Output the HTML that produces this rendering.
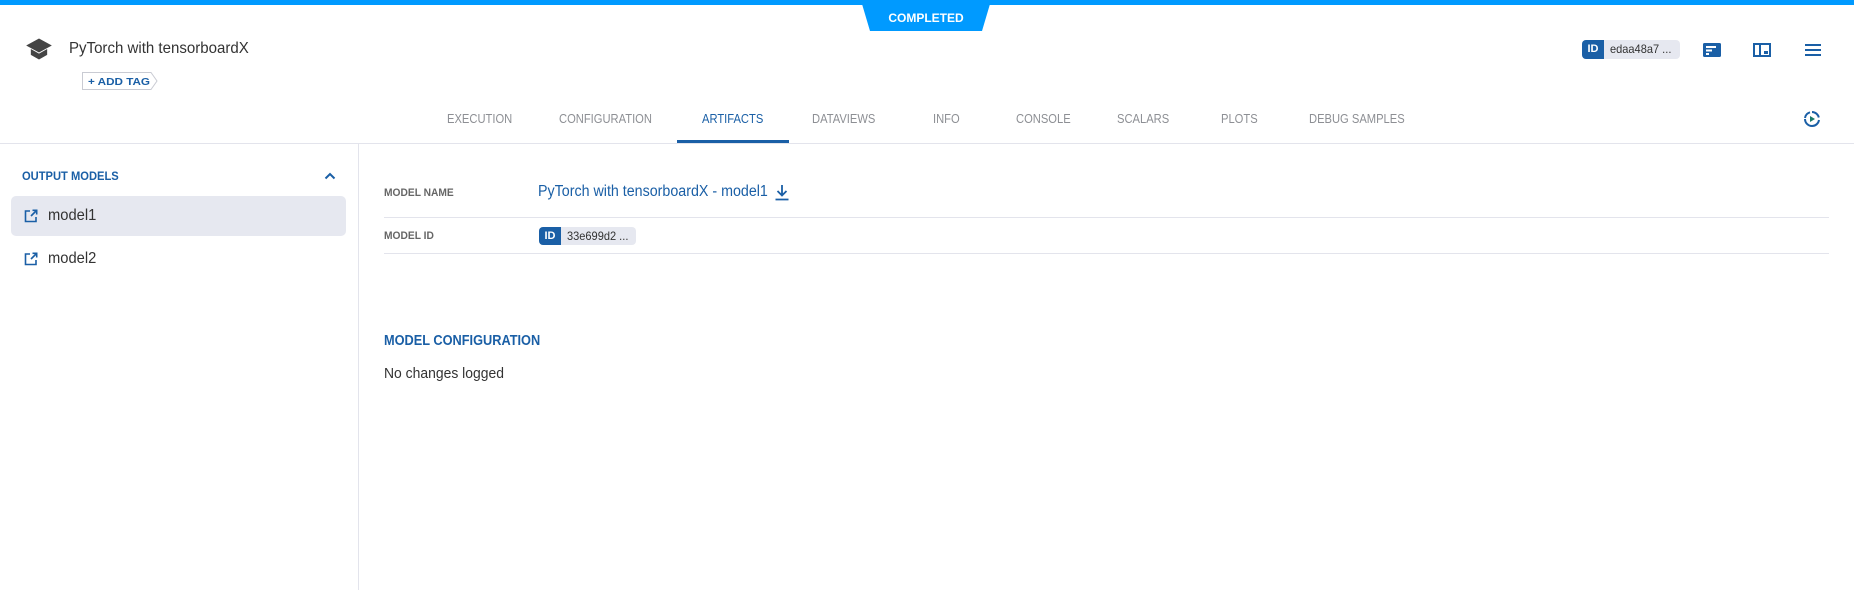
<!DOCTYPE html>
<html><head><meta charset="utf-8"><style>
*{box-sizing:border-box;margin:0;padding:0}
body{width:1854px;height:590px;overflow:hidden;background:#fff;font-family:"Liberation Sans",sans-serif;position:relative}
.a{position:absolute;transform-origin:0 0}
.tab{position:absolute;top:111px;font-size:13px;color:#8d8f94;transform:scaleX(.86);transform-origin:0 0}
.lbl{font-size:11px;font-weight:bold;color:#666;position:absolute;transform:scaleX(.93);transform-origin:0 0}
</style></head><body>
<div class="a" style="left:0;top:0;width:1854px;height:5px;background:#009aff"></div>
<svg class="a" style="left:862px;top:4px" width="128" height="28"><polygon points="0,0 128,0 120,27 8,27" fill="#009aff"/><text x="64" y="18" text-anchor="middle" font-family="Liberation Sans" font-size="12" font-weight="bold" fill="#fff">COMPLETED</text></svg>
<svg class="a" style="left:25px;top:37px" width="28" height="24" viewBox="0 0 24 20"><path d="M12 1L1 7l11 6 11-6z" fill="#444"/><path d="M5 10v5l7 4 7-4v-5l-7 4z" fill="#444"/></svg>
<div class="a" style="left:69px;top:40px;font-size:16px;color:#333;transform:scaleX(.94)">PyTorch with tensorboardX</div>
<svg class="a" style="left:81px;top:71px" width="78" height="20"><path d="M1.5 1.5H70L76 10 70 18.5H1.5z" fill="#fff" stroke="#c9cbd3"/><text x="7" y="14" font-family="Liberation Sans" font-size="10.5" font-weight="bold" fill="#1a5fa6" textLength="62" lengthAdjust="spacingAndGlyphs">+ ADD TAG</text></svg>
<div class="tab" style="left:447px">EXECUTION</div>
<div class="tab" style="left:559px">CONFIGURATION</div>
<div class="tab" style="left:702px;color:#1a5fa6">ARTIFACTS</div>
<div class="tab" style="left:812px">DATAVIEWS</div>
<div class="tab" style="left:933px">INFO</div>
<div class="tab" style="left:1016px">CONSOLE</div>
<div class="tab" style="left:1117px">SCALARS</div>
<div class="tab" style="left:1221px">PLOTS</div>
<div class="tab" style="left:1309px">DEBUG SAMPLES</div>
<div class="a" style="left:677px;top:140px;width:112px;height:3px;background:#1a5fa6"></div>
<div class="a" style="left:0;top:143px;width:1854px;height:1px;background:#e3e4ec"></div>
<div class="a" style="left:1582px;top:40px;width:98px;height:19px;border-radius:4px;background:#e6e8f0;overflow:hidden"><div style="position:absolute;left:0;top:0;width:22px;height:19px;background:#1a5fa6;color:#fff;font-size:11px;font-weight:bold;text-align:center;line-height:19px">ID</div><div style="position:absolute;left:28px;top:2px;font-size:12px;color:#333;transform:scaleX(.92);transform-origin:0 0">edaa48a7 ...</div></div>
<svg class="a" style="left:1703px;top:43px" width="18" height="14"><rect width="18" height="14" rx="1.5" fill="#1a5fa6"/><rect x="3" y="3" width="10" height="2" fill="#fff"/><rect x="3" y="6.5" width="6" height="2" fill="#fff"/><rect x="3" y="10" width="3" height="2" fill="#fff"/></svg>
<svg class="a" style="left:1753px;top:43px" width="18" height="14"><rect x="1" y="1" width="16" height="12" fill="none" stroke="#1a5fa6" stroke-width="2"/><rect x="6" y="1" width="2" height="12" fill="#1a5fa6"/><rect x="11" y="8" width="4" height="3" fill="#1a5fa6"/></svg>
<svg class="a" style="left:1805px;top:44px" width="16" height="12"><rect y="0" width="16" height="2" fill="#1a5fa6"/><rect y="5" width="16" height="2" fill="#1a5fa6"/><rect y="10" width="16" height="2" fill="#1a5fa6"/></svg>
<svg class="a" style="left:1803px;top:110px" width="18" height="18" viewBox="0 0 18 18"><path d="M9 2a7 7 0 0 1 6.8 5.5M16 10a7 7 0 0 1-7 6M9 16a7 7 0 0 1-7-7M2 8A7 7 0 0 1 7 2.3" fill="none" stroke="#1a5fa6" stroke-width="2"/><path d="M7 6l5 3-5 3z" fill="#1a7a6a"/></svg>
<div class="a" style="left:358px;top:144px;width:1px;height:446px;background:#e3e4ec"></div>
<div class="a" style="left:22px;top:169px;font-size:12px;font-weight:bold;color:#1a5fa6;transform:scaleX(.93)">OUTPUT MODELS</div>
<svg class="a" style="left:324px;top:171px" width="12" height="9"><path d="M1.5 7.5L6 3l4.5 4.5" fill="none" stroke="#1a5fa6" stroke-width="2"/></svg>
<div class="a" style="left:11px;top:196px;width:335px;height:40px;border-radius:5px;background:#e6e8f0"></div>
<svg class="a" style="left:24px;top:209px" width="14" height="14"><path d="M6 2H1.5v10.5H12V8" fill="none" stroke="#1a5fa6" stroke-width="1.6"/><path d="M7 7l5.5-5.5M8.5 1.3h4.2v4.2" fill="none" stroke="#1a5fa6" stroke-width="1.6"/></svg>
<div class="a" style="left:48px;top:207px;font-size:16px;color:#333;transform:scaleX(.92)">model1</div>
<svg class="a" style="left:24px;top:252px" width="14" height="14"><path d="M6 2H1.5v10.5H12V8" fill="none" stroke="#1a5fa6" stroke-width="1.6"/><path d="M7 7l5.5-5.5M8.5 1.3h4.2v4.2" fill="none" stroke="#1a5fa6" stroke-width="1.6"/></svg>
<div class="a" style="left:48px;top:250px;font-size:16px;color:#333;transform:scaleX(.92)">model2</div>
<div class="lbl" style="left:384px;top:187px">MODEL NAME</div>
<div class="a" style="left:538px;top:183px;font-size:15.5px;color:#1a5fa6;transform:scaleX(.92);white-space:nowrap">PyTorch with tensorboardX - model1</div>
<svg class="a" style="left:774px;top:184px" width="16" height="17"><path d="M8 1v10M3.5 7L8 11.5 12.5 7M1.5 15.5h13" fill="none" stroke="#1a5fa6" stroke-width="1.8"/></svg>
<div class="a" style="left:384px;top:217px;width:1445px;height:1px;background:#e3e4ec"></div>
<div class="lbl" style="left:384px;top:230px">MODEL ID</div>
<div class="a" style="left:539px;top:227px;width:97px;height:18px;border-radius:4px;background:#e6e8f0;overflow:hidden"><div style="position:absolute;left:0;top:0;width:22px;height:18px;background:#1a5fa6;color:#fff;font-size:11px;font-weight:bold;text-align:center;line-height:18px">ID</div><div style="position:absolute;left:28px;top:2px;font-size:12px;color:#333;transform:scaleX(.92);transform-origin:0 0">33e699d2 ...</div></div>
<div class="a" style="left:384px;top:253px;width:1445px;height:1px;background:#e3e4ec"></div>
<div class="a" style="left:384px;top:333px;font-size:14.5px;font-weight:bold;color:#1a5fa6;transform:scaleX(.88);white-space:nowrap">MODEL CONFIGURATION</div>
<div class="a" style="left:384px;top:366px;font-size:14.5px;color:#333;transform:scaleX(.96);white-space:nowrap">No changes logged</div>
</body></html>
